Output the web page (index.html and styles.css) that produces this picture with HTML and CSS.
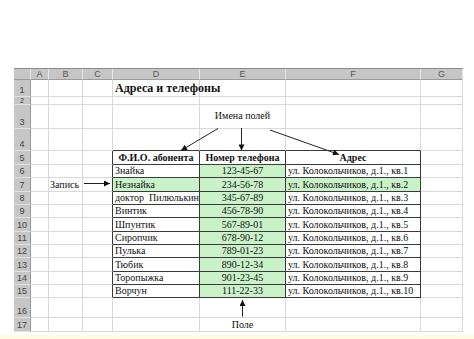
FILE: index.html
```html
<!DOCTYPE html>
<html lang="ru">
<head>
<meta charset="utf-8">
<title>Адреса и телефоны</title>
<link rel="stylesheet" href="styles.css">
</head>
<body>
<div class="page">
  <div class="sheet">
    <div class="corner"></div><div class="ch">A</div><div class="ch">B</div><div class="ch">C</div><div class="ch">D</div><div class="ch">E</div><div class="ch">F</div><div class="ch">G</div>

    <div class="rh">1</div><div class="c"></div><div class="c"></div><div class="c"></div><div class="c title">Адреса и телефоны</div><div class="c"></div><div class="c"></div><div class="c"></div>
    <div class="rh tiny">2</div><div class="c"></div><div class="c"></div><div class="c"></div><div class="c"></div><div class="c"></div><div class="c"></div><div class="c"></div>
    <div class="rh">3</div><div class="c"></div><div class="c"></div><div class="c"></div><div class="c"></div><div class="c ctr note">Имена полей</div><div class="c"></div><div class="c"></div>
    <div class="rh">4</div><div class="c"></div><div class="c"></div><div class="c"></div><div class="c tt"></div><div class="c tt"></div><div class="c tt"></div><div class="c"></div>

    <div class="rh">5</div><div class="c"></div><div class="c"></div><div class="c tl"></div><div class="c t ctr b">Ф.И.О. абонента</div><div class="c t ctr b">Номер телефона</div><div class="c t ctr b">Адрес</div><div class="c"></div>
    <div class="rh">6</div><div class="c"></div><div class="c"></div><div class="c tl"></div><div class="c t">Знайка</div><div class="c t g ctr">123-45-67</div><div class="c t">ул. Колокольчиков, д.1., кв.1</div><div class="c"></div>
    <div class="rh">7</div><div class="c"></div><div class="c rec">Запись</div><div class="c tl"></div><div class="c t g">Незнайка</div><div class="c t g ctr">234-56-78</div><div class="c t g">ул. Колокольчиков, д.1., кв.2</div><div class="c"></div>
    <div class="rh">8</div><div class="c"></div><div class="c"></div><div class="c tl"></div><div class="c t">доктор&nbsp; Пилюлькин</div><div class="c t g ctr">345-67-89</div><div class="c t">ул. Колокольчиков, д.1., кв.3</div><div class="c"></div>
    <div class="rh">9</div><div class="c"></div><div class="c"></div><div class="c tl"></div><div class="c t">Винтик</div><div class="c t g ctr">456-78-90</div><div class="c t">ул. Колокольчиков, д.1., кв.4</div><div class="c"></div>
    <div class="rh">10</div><div class="c"></div><div class="c"></div><div class="c tl"></div><div class="c t">Шпунтик</div><div class="c t g ctr">567-89-01</div><div class="c t">ул. Колокольчиков, д.1., кв.5</div><div class="c"></div>
    <div class="rh">11</div><div class="c"></div><div class="c"></div><div class="c tl"></div><div class="c t">Сиропчик</div><div class="c t g ctr">678-90-12</div><div class="c t">ул. Колокольчиков, д.1., кв.6</div><div class="c"></div>
    <div class="rh">12</div><div class="c"></div><div class="c"></div><div class="c tl"></div><div class="c t">Пулька</div><div class="c t g ctr">789-01-23</div><div class="c t">ул. Колокольчиков, д.1., кв.7</div><div class="c"></div>
    <div class="rh">13</div><div class="c"></div><div class="c"></div><div class="c tl"></div><div class="c t">Тюбик</div><div class="c t g ctr">890-12-34</div><div class="c t">ул. Колокольчиков, д.1., кв.8</div><div class="c"></div>
    <div class="rh">14</div><div class="c"></div><div class="c"></div><div class="c tl"></div><div class="c t">Торопыжка</div><div class="c t g ctr">901-23-45</div><div class="c t">ул. Колокольчиков, д.1., кв.9</div><div class="c"></div>
    <div class="rh">15</div><div class="c"></div><div class="c"></div><div class="c tl"></div><div class="c t">Ворчун</div><div class="c t g ctr">111-22-33</div><div class="c t">ул. Колокольчиков, д.1., кв.10</div><div class="c"></div>

    <div class="rh">16</div><div class="c"></div><div class="c"></div><div class="c"></div><div class="c"></div><div class="c"></div><div class="c"></div><div class="c"></div>
    <div class="rh">17</div><div class="c"></div><div class="c"></div><div class="c"></div><div class="c"></div><div class="c ctr">Поле</div><div class="c"></div><div class="c"></div>
  </div>
  <div class="band"></div>

  <svg class="arrows" width="474" height="339" viewBox="0 0 474 339" aria-hidden="true">
    <defs>
      <marker id="ah" viewBox="0 0 10 10" refX="10" refY="5" markerWidth="7" markerHeight="6" markerUnits="userSpaceOnUse" orient="auto">
        <path d="M0 0 L10 5 L0 10 Z" fill="#111"/>
      </marker>
    </defs>
    <g stroke="#222" stroke-width="1" fill="none">
      <line x1="218" y1="128.5" x2="181" y2="150.5" marker-end="url(#ah)"/>
      <line x1="241.5" y1="128" x2="241.5" y2="150.5" marker-end="url(#ah)"/>
      <line x1="270" y1="130" x2="339" y2="154.5" marker-end="url(#ah)"/>
      <line x1="84" y1="183.5" x2="110" y2="183.5" marker-end="url(#ah)"/>
      <line x1="242.5" y1="316.5" x2="242.5" y2="300" marker-end="url(#ah)"/>
    </g>
  </svg>
</div>
</body>
</html>
```

FILE: styles.css
```css
html, body {
  margin: 0;
  padding: 0;
  background: #ffffff;
}

.page {
  position: relative;
  width: 474px;
  height: 339px;
  overflow: hidden;
  padding-top: 68px;
  padding-left: 14px;
  box-sizing: border-box;
  font-family: "Liberation Serif", "Times New Roman", serif;
}

.sheet {
  display: grid;
  grid-template-columns: 17px 18px 34px 30px 87px 86px 135px 42px;
  grid-template-rows: 11px 17px 8px 24px 22px 14px repeat(10, 13.33px) 20px 14px;
  width: 449px;
  border-top: 1px solid #8a8a8a;
  box-sizing: border-box;
}

.corner,
.ch {
  background: #c6c6c6;
  border-right: 1px solid #e6e6e6;
  border-bottom: 1px solid #9a9a9a;
  font-family: "Liberation Sans", Arial, sans-serif;
  font-size: 9px;
  line-height: 10px;
  color: #555;
  display: flex;
  align-items: center;
  justify-content: center;
}

.rh {
  background: #c6c6c6;
  border-right: 1px solid #9a9a9a;
  border-bottom: 1px solid #e2e2e2;
  font-family: "Liberation Sans", Arial, sans-serif;
  font-size: 9px;
  line-height: 11px;
  color: #444;
  display: flex;
  align-items: flex-end;
  justify-content: center;
  overflow: hidden;
}

.rh.tiny {
  font-size: 7px;
  line-height: 7px;
  align-items: center;
}

.c {
  border-right: 1px solid #d9d9d9;
  border-bottom: 1px solid #d9d9d9;
  font-size: 10px;
  line-height: 12px;
  color: #111;
  display: flex;
  align-items: flex-end;
  padding: 0 2px 0 2px;
  white-space: nowrap;
  min-width: 0;
}

.t {
  border-right-color: #3a3a3a;
  border-bottom-color: #3a3a3a;
}

.tl {
  border-right-color: #3a3a3a;
}

.tt {
  border-bottom-color: #3a3a3a;
}

.g {
  background: #c9f2c9;
}

.ctr {
  justify-content: center;
}

.b {
  font-weight: bold;
}

.title {
  font-weight: bold;
  font-size: 12px;
  line-height: 14px;
  padding-bottom: 1px;
}

.note {
  padding-bottom: 6px;
}

.rec {
  padding-left: 1px;
}

.band {
  position: absolute;
  left: 0;
  right: 0;
  bottom: 0;
  height: 4px;
  background: #fffbe3;
}

.arrows {
  position: absolute;
  left: 0;
  top: 0;
  pointer-events: none;
}
```
